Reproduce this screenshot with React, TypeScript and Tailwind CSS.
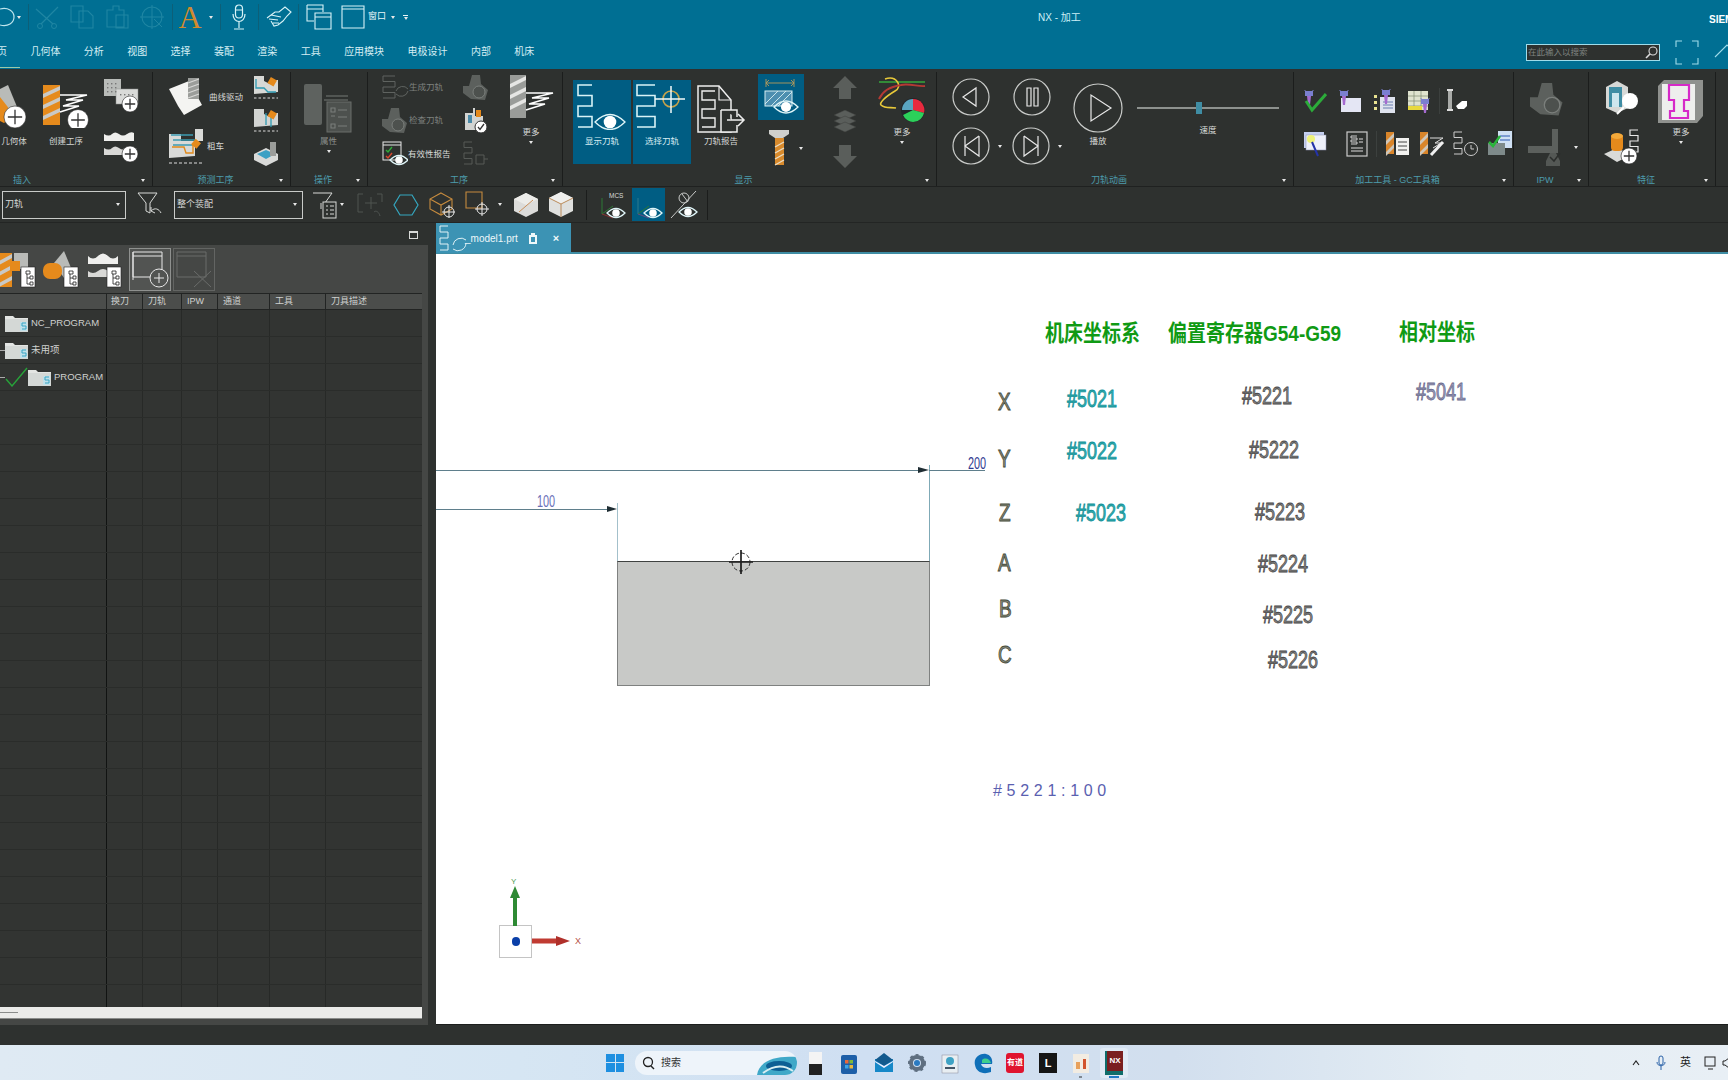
import React from "react";

type P = { children?: React.ReactNode; className?: string };
const S = ({ w, h, children, className = "" }: { w: number; h: number; children?: React.ReactNode; className?: string }) => (
  <svg width={w} height={h} viewBox={`0 0 ${w} ${h}`} className={`block shrink-0 ${className}`} fill="none">{children}</svg>
);

const serp = (x: number, y: number, w: number, h: number) =>
  `M${x + w} ${y}H${x}V${y + h / 4}H${x + w}V${y + h / 2}H${x}V${y + (3 * h) / 4}H${x + w}`;
const Serp = ({ x, y, w, h, c = "#cfeff5", sw = 1.6 }: any) => <path d={serp(x, y, w, h) + `V${y + h}H${x}`} stroke={c} strokeWidth={sw} />;
const Eye = ({ cx, cy, r = 14, c = "#dff5f8" }: any) => (
  <g>
    <path d={`M${cx - r} ${cy}Q${cx} ${cy - r} ${cx + r} ${cy}Q${cx} ${cy + r} ${cx - r} ${cy}Z`} stroke={c} strokeWidth="1.3" fill="none" />
    <circle cx={cx} cy={cy} r={r * 0.42} fill="#fff" />
  </g>
);
const Plus = ({ cx, cy, r = 11 }: any) => (
  <g>
    <circle cx={cx} cy={cy} r={r} fill="#fff" stroke="#222" strokeWidth="0.6" />
    <path d={`M${cx - r * 0.65} ${cy}H${cx + r * 0.65}M${cx} ${cy - r * 0.65}V${cy + r * 0.65}`} stroke="#333" strokeWidth="1.3" />
  </g>
);
const Mill = ({ x, y, w, h, o = "#e58a1c", b = "#c9c9c6" }: any) => {
  const n = Math.floor(h / 11);
  return (
    <g>
      <rect x={x} y={y} width={w} height={h} fill={o} />
      {Array.from({ length: n }).map((_, i) => (
        <polygon key={i} points={`${x},${y + i * 11 + 9} ${x + w},${y + i * 11 + 1} ${x + w},${y + i * 11 + 5} ${x},${y + i * 11 + 13}`} fill={b} />
      ))}
    </g>
  );
};
const Chev = ({ x, y, w = 24 }: any) => (
  <path d={`M${x} ${y}H${x + w}L${x + 6} ${y + 5}H${x + w - 4}L${x + 3} ${y + 11}H${x + w - 8}L${x} ${y + 17}`} stroke="#fff" strokeWidth="1.5" />
);
const Caret = ({ className = "" }: P) => <span className={`block w-0 h-0 border-x-[2.5px] border-x-transparent border-t-[3px] border-t-[#e8e8e8] ${className}`} />;
const Sep = ({ className = "" }: P) => <span className={`block w-px h-[26px] bg-[#0d5f78] shrink-0 ${className}`} />;

const Group = ({ w, label, children, lc = "pr-[12px]" }: { w: string; label: string; children: React.ReactNode; lc?: string }) => (
  <section className={`relative h-[114px] shrink-0 ${w} border-r border-[#1b1d1c]`}>
    <div className="flex h-full">{children}</div>
    <div className={`absolute bottom-0 left-0 right-0 text-center text-[9px] leading-[12px] text-[#4d9cac] ${lc}`}>{label}</div>
    <Caret className="absolute right-[7px] bottom-[4px]" />
  </section>
);

const Big = ({ w, pt, icon, label, caret, cls = "", dim, h = "h-[63px]" }: { w: string; pt: string; icon: React.ReactNode; label: string; caret?: boolean; cls?: string; dim?: boolean; h?: string }) => (
  <div className={`flex flex-col items-center shrink-0 ${w} ${cls}`}>
    <div className={`${h} ${pt}`}>{icon}</div>
    <span className={`text-[8.5px] leading-[12px] whitespace-nowrap ${dim ? "text-[#8b8f8c]" : "text-[#d6d8d6]"}`}>{label}</span>
    {caret && <Caret className="mt-[3px]" />}
  </div>
);

/* ---------- ribbon icons ---------- */
const IcGeo = () => (
  <S w={28} h={43}>
    <polygon points="0,4 8,0 22,34 14,40 0,22" fill="#b9bbb8" />
    <polygon points="-2,12 0,12 14,30 4,38 0,36" fill="#e58a1c" />
    <Plus cx={15} cy={32} r={11} />
  </S>
);
const IcOp = () => (
  <S w={48} h={43}>
    <Mill x={1} y={0} w={17} h={40} />
    <Chev x={18} y={10} w={27} />
    <Plus cx={36} cy={35} r={10.5} />
  </S>
);
const IcBlockPlus = () => (
  <S w={36} h={34}>
    <rect x={0} y={0} width={17} height={17} fill="#b9bcb9" />
    <rect x={12} y={10} width={22} height={15} fill="#d9dad8" stroke="#8d8f8d" strokeWidth="0.5" />
    <g fill="#777">
      {[3, 7, 11].map((x) => [4, 8, 12].map((y) => <rect key={x + "-" + y} x={x} y={y} width="1.4" height="1.4" />))}
      {[16, 20, 24, 28].map((x) => <rect key={x} x={x} y={15} width="1.4" height="1.4" />)}
    </g>
    <Plus cx={26} cy={25} r={8} />
  </S>
);
const IcWavePlus = () => (
  <S w={36} h={34}>
    <path d="M0 4Q5 7 8 4T15 4T23 4T30 3V11H0Z" fill="#efefed" />
    <path d="M0 18Q5 21 8 18T15 18T23 18V25H0Z" fill="#d9d9d7" />
    <Plus cx={26} cy={24} r={8} />
  </S>
);
const IcCurve = () => (
  <S w={35} h={38}>
    <polygon points="0,11 20,3 33,27 15,37 9,28" fill="#f4f4f2" />
    <rect x={19} y={0} width={11} height={21} fill="#9b9d9a" />
    <path d="M19 5L30 1M19 10L30 6M19 15L30 11M19 20L30 16" stroke="#d8d8d6" strokeWidth="1.2" />
  </S>
);
const IcTurnBig = () => (
  <S w={35} h={35}>
    <polygon points="0,5 12,5 12,12 34,12 34,0 26,0 26,27 0,29" fill="#d9dad8" />
    <path d="M2 6H24M4 11H26M4 16H24" stroke="#3d9bb1" strokeWidth="1.4" />
    <path d="M3 18H15L17 24H24V16" stroke="#e08a1c" strokeWidth="1.4" />
    <rect x={24} y={11} width={7} height={7} fill="#e58a1c" transform="rotate(40 27 14)" />
    <path d="M0 34H35" stroke="#ddd" strokeDasharray="3 2" />
  </S>
);
const IcTurnSm = ({ v = 0 }: { v?: number }) => (
  <S w={24} h={24}>
    <polygon points="0,0 10,0 10,5 16,8 20,4 24,4 24,16 0,18" fill={v ? "#d2d4d2" : "#d8d9d6"} />
    <path d={v ? "M12 4V16M17 6V18" : "M2 3V12H10L14 16H22"} stroke="#2e9ab2" strokeWidth="1.3" />
    <rect x={15} y={2} width={7} height={7} fill="#e58a1c" transform="rotate(30 18 5)" />
    <path d="M0 22H24" stroke="#ddd" strokeDasharray="2.5 2" />
  </S>
);
const IcPocket = () => (
  <S w={24} h={24}>
    <polygon points="0,12 12,6 24,12 24,18 12,24 0,18" fill="#d9dad8" />
    <polygon points="3,12 12,8 21,12 12,17" fill="#3ba0c4" />
    <rect x={16} y={0} width={6} height={14} fill="#9b9d9a" />
  </S>
);
const IcAttr = () => (
  <S w={49} h={49}>
    <rect x={0} y={0} width={18} height={41} rx={2} fill="#5e625f" />
    <path d="M20 16H44M22 12H44" stroke="#5e625f" strokeWidth="1.5" />
    <rect x={23} y={18} width={24} height={30} fill="#4d514e" stroke="#6a6e6b" />
    <path d="M27 24H31V28H27ZM34 26H43M27 32H31M34 33H43M27 40H31V44H27ZM34 42H43" stroke="#7a7e7b" strokeWidth="1.1" />
  </S>
);
const IcGen = () => (
  <S w={27} h={25}>
    <Serp x={1} y={1} w={12} h={22} c="#5f6360" sw={1} />
    <path d="M14 16a7 7 0 0 1 12-2M26 16a7 7 0 0 1-12 3" stroke="#5f6360" strokeWidth="1" />
  </S>
);
const IcMachine = ({ x = 0 }: { x?: number }) => (
  <g transform={`translate(${x} 0)`}>
    <polygon points="0,11 6,11 9,0 17,0 18,9 25,15 22,25 8,24 0,18" fill="#5c605d" />
    <circle cx={16} cy={17} r={6} fill="#4d514e" stroke="#7b7f7c" />
  </g>
);
const IcReport = () => (
  <S w={26} h={26}>
    <rect x={1} y={1} width={18} height={18} stroke="#e8e8e8" fill="#2d302e" />
    <path d="M1 4H19" stroke="#e8e8e8" />
    <path d="M4 9L6 11L10 6" stroke="#2fae3a" strokeWidth="1.4" />
    <path d="M4 15L6 17L10 12" stroke="#d9482d" strokeWidth="1.4" />
    <Eye cx={17} cy={19} r={9} />
  </S>
);
const IcMachCheck = () => (
  <S w={25} h={25}>
    <polygon points="2,5 10,5 10,0 12,0 12,8 20,8 20,22 2,22" fill="#d2d4d2" />
    <rect x={5} y={7} width={4} height={8} fill="#4a8aa8" />
    <rect x={13} y={2} width={5} height={7} fill="#e58a1c" />
    <circle cx={18} cy={19} r={6} fill="#fff" stroke="#333" />
    <path d="M15 19L17 21.5L21 16" stroke="#333" strokeWidth="1.3" />
  </S>
);
const IcDimSerpDoc = () => (
  <S w={25} h={25}>
    <Serp x={1} y={1} w={8} h={22} c="#565a57" sw={1} />
    <path d="M13 14H21V23H13ZM21 18H25" stroke="#565a57" />
  </S>
);
const IcMoreMill = () => (
  <S w={46} h={44}>
    <Mill x={2} y={0} w={16} h={43} o="#9a9c99" b="#e6e6e4" />
    <Chev x={18} y={18} w={27} />
  </S>
);
const IcShow = () => (
  <S w={58} h={50}>
    <Serp x={5} y={5} w={14} h={42} c="#d8f3f7" />
    <Eye cx={37} cy={42} r={15} />
  </S>
);
const IcPick = () => (
  <S w={58} h={50}>
    <Serp x={4} y={5} w={18} h={42} c="#d8f3f7" />
    <circle cx={38} cy={19} r={8} stroke="#c7a24a" strokeWidth="1.6" />
    <path d="M22 19H52M38 6V33" stroke="#f2fafa" strokeWidth="1.5" />
  </S>
);
const IcPathReport = () => (
  <S w={49} h={50}>
    <path d="M1 1H22L34 15V47H1Z" stroke="#eee" strokeWidth="1.5" />
    <path d="M22 1V15H34" stroke="#eee" strokeWidth="1.2" />
    <Serp x={5} y={6} w={13} h={36} c="#eee" sw={1.4} />
    <path d="M24 25H40V32M40 40V47H24V25" stroke="#eee" strokeWidth="1.5" fill="#2d302e" />
    <path d="M30 35H47M41 29L47 35L41 41" stroke="#eee" strokeWidth="1.5" />
  </S>
);
const IcClear = () => (
  <S w={46} h={46}>
    <path d="M8 9H36M8 5V13M36 5V13M11 6L8 9L11 12M33 6L36 9L33 12" stroke="#b49a5a" strokeWidth="0.9" />
    <rect x={7} y={17} width={27} height={15} fill="#4d8fb0" stroke="#d8eef2" />
    <path d="M7 30L20 17M13 32L28 17M20 32L34 18" stroke="#d8eef2" strokeWidth="0.9" />
    <Eye cx={28} cy={33} r={12} />
  </S>
);
const IcEndmill = () => (
  <S w={22} h={36}>
    <polygon points="1,0 21,0 21,4 15,8 15,13 7,13 7,8 1,4" fill="#cfcfcc" />
    <rect x={7} y={8} width={9} height={27} fill="#d88a2c" />
    <path d="M7 17L16 12M7 23L16 18M7 29L16 24M7 35L16 30" stroke="#eadcc4" strokeWidth="1.4" />
  </S>
);
const Arrow = ({ up }: { up?: boolean }) => (
  <S w={24} h={24}>
    <polygon points={up ? "12,0 24,12 18,12 18,23 6,23 6,12 0,12" : "12,24 24,12 18,12 18,1 6,1 6,12 0,12"} fill="#5a5e5b" />
  </S>
);
const Layers = () => (
  <S w={24} h={24}>
    {[0, 6, 12].map((y) => <polygon key={y} points={`12,${y} 23,${y + 5} 12,${y + 10} 1,${y + 5}`} fill="#5a5e5b" stroke="#3c3f3d" strokeWidth="0.5" />)}
  </S>
);
const IcMorePie = () => (
  <S w={50} h={46}>
    <path d="M2 5H48" stroke="#35a83c" strokeWidth="1.6" />
    <path d="M8 2C20 -2 26 10 18 14C8 20 2 26 4 28C8 32 14 30 19 31" stroke="#e8c93a" strokeWidth="1.6" />
    <path d="M2 22C6 14 12 10 24 8C32 6 42 10 48 9" stroke="#b53a34" strokeWidth="2" />
    <circle cx={36} cy={33} r={12} fill="#22262a" />
    <path d="M36 33V22A11 11 0 0 0 25 33Z" fill="#5aa5c0" />
    <path d="M36 33V22A11 11 0 0 1 47 36Z" fill="#e82a3e" />
    <path d="M36 33L47 36A11 11 0 0 1 26 38Z" fill="#2cd05a" />
  </S>
);
const Circ = ({ d, s = 38 }: { d: string; s?: number }) => (
  <S w={s} h={s}>
    <circle cx={s / 2} cy={s / 2} r={s / 2 - 1} stroke="#c9cbc9" strokeWidth="1.2" />
    <path d={d} stroke="#e8e8e8" strokeWidth="1.2" />
  </S>
);
const Cube = ({ c = "#b5804a" }: { c?: string }) => (
  <S w={26} h={28}>
    <polygon points="13,1 25,7 25,20 13,26 1,20 1,7" fill="#dfe0de" />
    <polygon points="13,1 25,7 13,13 1,7" fill="#efefed" />
    <path d="M13 13V26M13 13L25 7M13 13L1 7" stroke={c} strokeWidth="0.9" />
  </S>
);
/* small toolbox icons */
const Cutter = ({ x = 0, y = 0 }: any) => (
  <g transform={`translate(${x} ${y})`}>
    <rect x={1} y={0} width={8} height={5} fill="#7b7fd0" />
    <path d="M1 0V-1M9 0V-1" stroke="#7b7fd0" />
    <polygon points="3,5 7,5 6,14 4,14" fill="#a56ad0" />
  </g>
);
const T1 = () => (
  <S w={24} h={24}><Cutter x={1} y={2} /><path d="M3 12L9 21L23 5" stroke="#2cab3a" strokeWidth="3" /></S>
);
const T2 = () => (
  <S w={24} h={24}><rect x={3} y={9} width={20} height={14} fill="#e4e6f4" /><Cutter x={1} y={2} /></S>
);
const T3 = () => (
  <S w={24} h={24}><rect x={8} y={8} width={15} height={16} fill="#dfe3ee" /><path d="M11 13H21M11 16H21M11 19H21" stroke="#6a7fb0" /><Cutter x={9} y={1} /><rect x={2} y={6} width={3} height={3} fill="#e8e290" /><rect x={2} y={12} width={3} height={3} fill="#e8e290" /><rect x={2} y={18} width={3} height={3} fill="#e8e290" /></S>
);
const T4 = () => (
  <S w={24} h={24}><rect x={1} y={2} width={20} height={19} fill="#dfe3cf" /><path d="M1 7H21M1 12H21M1 17H21M7 2V21M14 2V21" stroke="#7f8a70" strokeWidth="0.7" /><rect x={1} y={17} width={14} height={4} fill="#e8d93f" /><Cutter x={13} y={10} /></S>
);
const T5 = () => (
  <S w={26} h={24}><rect x={2} y={0} width={4} height={22} fill="#a9aba8" /><rect x={1} y={0} width={6} height={2} fill="#ddd" /><rect x={1} y={20} width={6} height={2} fill="#ddd" /><path d="M10 17L16 12H21V17L18 20H12Z" fill="#fff" /></S>
);
const T6 = () => (
  <S w={24} h={26}><rect x={1} y={1} width={20} height={16} fill="#c5cff0" /><rect x={3} y={4} width={20} height={15} fill="#eef0fa" stroke="#8a90b0" strokeWidth="0.5" /><circle cx={8} cy={8} r={4} fill="#eef27a" /><path d="M9 11L15 25" stroke="#2433a8" strokeWidth="2" /></S>
);
const T7 = () => (
  <S w={24} h={26}><rect x={2} y={1} width={20} height={24} stroke="#ccc" strokeWidth="1.2" /><Serp x={6} y={5} w={6} h={8} c="#ddd" sw={0.9} /><path d="M6 17H18M6 20H18M14 8H18M14 11H18" stroke="#ddd" /></S>
);
const T8 = () => (
  <S w={26} h={26}><Mill x={1} y={1} w={8} h={22} o="#d9852a" b="#cfc6b8" /><rect x={11} y={7} width={13} height={17} fill="#f1f1ef" /><path d="M13 11H22M13 15H22M13 19H22" stroke="#444" /></S>
);
const T9 = () => (
  <S w={26} h={26}><Mill x={1} y={1} w={8} h={22} o="#d9852a" b="#cfc6b8" /><path d="M11 7H24L16 12H22L14 17" stroke="#ddd" /><path d="M24 11L12 24" stroke="#f0f0f0" strokeWidth="3" /></S>
);
const T10 = () => (
  <S w={26} h={26}><Serp x={1} y={1} w={8} h={22} c="#ccc" sw={1} /><circle cx={18} cy={18} r={6.5} stroke="#ccc" /><path d="M18 14V18H21" stroke="#ccc" /></S>
);
const T11 = () => (
  <S w={26} h={26}><rect x={11} y={0} width={14} height={17} fill="#cfe0f4" /><path d="M13 5H23M13 9H23" stroke="#2a58b0" /><rect x={1} y={12} width={17} height={12} fill="#7e8a8a" /><path d="M2 11L6 15L13 5" stroke="#29b53a" strokeWidth="2.5" /></S>
);
const IpwA = () => (
  <S w={38} h={36}><g transform="translate(2 3) scale(1.3)"><polygon points="0,11 6,11 9,0 17,0 18,9 25,15 22,25 8,24 0,18" fill="#5c605d" /><circle cx={17} cy={17} r={6} fill="#4d514e" stroke="#7b7f7c" /></g></S>
);
const IpwB = () => (
  <S w={38} h={37}><path d="M0 17H24V0H30V24H0Z" fill="#5c605d" /><polygon points="18,37 32,37 32,32 28,24 22,24 18,32" fill="#545855" /><path d="M22 28L26 32L32 24" stroke="#2b2e2c" strokeWidth="1.5" /></S>
);
const FeatA = () => (
  <S w={37} h={36}><polygon points="2,7 13,1 24,7 24,28 13,33 2,28" fill="#d6d8d6" /><rect x={5} y={7} width={13} height={20} fill="#3f8da4" /><rect x={8} y={13} width={7} height={14} fill="#cde6ee" /><circle cx={26} cy={21} r={8} fill="#fff" /><path d="M20 27L13 34" stroke="#fff" strokeWidth="2" /></S>
);
const FeatB = () => (
  <S w={37} h={36}><polygon points="0,25 13,19 27,26 13,33" fill="#d9dad8" /><rect x={7} y={5} width={12} height={17} rx={4} fill="#e58a1c" /><ellipse cx={13} cy={7} rx={6} ry={3} fill="#f4a93a" /><Serp x={26} y={1} w={8} h={22} c="#e8e8e8" sw={1.2} /><Plus cx={25} cy={27} r={8} /></S>
);
const FeatC = () => (
  <S w={46} h={44}>
    <polygon points="0,6 6,0 45,0 45,36 39,43 0,43" fill="#8f918e" />
    <rect x={4} y={4} width={33} height={36} fill="#eeefed" />
    <path d="M11 5H31V20H26V31H30V38H12V31H16V20H11Z" stroke="#d62ac8" strokeWidth="2.2" />
  </S>
);
const Folder = () => (
  <S w={23} h={18}>
    <path d="M0 2H8L10 4H23V18H0Z" fill="#e3e5e3" />
    <rect x={0} y={5} width={23} height={13} fill="#d4d8d6" />
    <rect x={15} y={8} width={7} height={9} fill="#bfe0ea" />
    <path d="M21 9H17V12H21V15H17" stroke="#38a5c4" strokeWidth="1" />
  </S>
);
const TreeBadge = () => (
  <g>
    <rect x={0} y={0} width={14} height={20} fill="#fff" stroke="#222" strokeWidth="0.6" />
    <path d="M5 4H9V7H5ZM9 9H12V12H9ZM9 15H12V18H9ZM6 7V17H9M6 11H9" stroke="#222" strokeWidth="0.8" />
  </g>
);

const teal = "text-[#37aeb0] [-webkit-text-stroke:0.6px_#0e8f96]";
const grey = "text-[#8a8a8a] [-webkit-text-stroke:0.6px_#444]";

export default function App() {
  const tabs = ["几何体", "分析", "视图", "选择", "装配", "渲染", "工具", "应用模块", "电极设计", "内部", "机床"];
  return (
    <div className="w-[1728px] h-[1080px] overflow-hidden flex flex-col bg-[#2e312f] text-[#d8dad8] [font-family:'Liberation_Sans','Noto_Sans_CJK_SC',sans-serif]">
      {/* title + tabs */}
      <header className="h-[69px] shrink-0 bg-[#006f93] flex flex-col relative">
        <div className="h-[34px] flex items-center relative">
          <S w={15} h={20}><path d="M0 2C8 0 14 4 14 10S8 20 0 18" stroke="#bfe6ee" strokeWidth="1.2" /></S>
          <Caret className="ml-[2px]" />
          <Sep className="ml-[7px]" />
          <S w={25} h={24} className="ml-[6px]"><path d="M1 4L18 19M23 2L6 19" stroke="#1f86a3" strokeWidth="1.2" /><circle cx="5" cy="21" r="2.5" stroke="#1f86a3" /><circle cx="19" cy="21" r="2.5" stroke="#1f86a3" /></S>
          <S w={24} h={24} className="ml-[10px]"><path d="M1 1H13V17H1ZM9 6H18L23 11V23H9Z" stroke="#1f86a3" strokeWidth="1.1" /></S>
          <S w={24} h={24} className="ml-[11px]"><path d="M2 5H8V1H14V5H19V22H2ZM11 10H23V23H11Z" stroke="#1f86a3" strokeWidth="1.1" /></S>
          <S w={24} h={24} className="ml-[11px]"><circle cx="12" cy="12" r="10" stroke="#1f86a3" strokeWidth="1.1" /><path d="M12 0V24M0 12H24M14 14L22 22" stroke="#1f86a3" /></S>
          <Sep className="ml-[8px]" />
          <span className="ml-[4px] w-[26px] text-center text-[32px] leading-none text-[#d08a2e] [font-family:'Liberation_Serif',serif]">A</span>
          <Caret className="ml-[6px]" />
          <Sep className="ml-[7px]" />
          <S w={14} h={26} className="ml-[11px]"><rect x="3.5" y="1" width="7" height="13" rx="3.5" stroke="#d8f3f7" strokeWidth="1.2" /><path d="M3 6H11M1 10C1 20 13 20 13 10M7 18V24M2 25H12" stroke="#d8f3f7" strokeWidth="1.2" /></S>
          <Sep className="ml-[12px]" />
          <S w={26} h={22} className="ml-[7px]"><path d="M1 12L9 6H13L19 1L25 6L21 10L17 15L12 19L8 20L5 15M5 9L15 11M3 13L12 14M7 17L13 17" stroke="#d8f3f7" strokeWidth="1.1" /></S>
          <Sep className="ml-[6px]" />
          <S w={26} h={26} className="ml-[7px]"><path d="M1 1H17V8M1 5H17M1 1V17H8M9 9H25V25H9ZM9 13H25" stroke="#d8f3f7" strokeWidth="1.1" /></S>
          <S w={24} h={24} className="ml-[9px]"><path d="M1 1H23V23H1ZM1 4H23" stroke="#d8f3f7" strokeWidth="1.1" /></S>
          <span className="ml-[3px] text-[9px] text-[#e8f5f8]">窗口</span>
          <Caret className="ml-[5px]" />
          <span className="ml-[8px] flex flex-col items-center gap-[1px]"><span className="block w-[5px] h-px bg-[#e8f5f8]" /><Caret /></span>
          <span className="absolute left-[1038px] top-[11px] text-[10px] leading-[13px] text-[#cdeff6]">NX - 加工</span>
          <span className="absolute left-[1709px] top-[13px] text-[10px] leading-[13px] font-bold text-white whitespace-nowrap">SIEMENS</span>
        </div>
        <nav className="h-[35px] flex items-center text-[10px] text-[#d5eef3] gap-[23.4px] -ml-[13px] pb-[1px]">
          <span>主页</span>
          {tabs.map((t) => <span key={t}>{t}</span>)}
        </nav>
        <span className="absolute left-0 bottom-[1px] w-[20px] h-[1px] bg-[#9bc9a8]" />
        <div className="absolute left-[1526px] top-[44px] w-[134px] h-[17px] bg-[#2e312f] border border-[#9fdcea] flex items-center justify-between pl-[1px] pr-[1px]">
          <span className="text-[8.5px] text-[#7e8380]">在此输入以搜索</span>
          <S w={13} h={13}><circle cx="8" cy="5" r="4" stroke="#ddd" strokeWidth="1.1" /><path d="M5 8L1 12" stroke="#ddd" strokeWidth="1.6" /></S>
        </div>
        <S w={24} h={25} className="absolute left-[1675px] top-[40px]"><path d="M7 1H1V7M17 1H23V7M1 18V24H7M23 18V24H17" stroke="#9fdcea" strokeWidth="1.1" /></S>
        <S w={14} h={14} className="absolute left-[1714px] top-[44px]"><path d="M1 13L13 1L14 2" stroke="#9fdcea" strokeWidth="1.1" /></S>
      </header>

      {/* ribbon */}
      <div className="h-[118px] shrink-0 flex pt-[3px] bg-[#2e312f] border-b border-[#1f2120] w-[1728px]">
        <Group w="w-[153px]" label="插入" lc="pr-[108px]">
          <Big w="w-[28px]" pt="pt-[13px]" icon={<IcGeo />} label="几何体" />
          <Big w="w-[48px]" cls="ml-[14px]" pt="pt-[13px]" icon={<IcOp />} label="创建工序" />
          <div className="ml-[14px] pt-[7px] flex flex-col gap-[17px]"><IcBlockPlus /><IcWavePlus /></div>
        </Group>
        <Group w="w-[138px]" label="预测工序">
          <div className="pl-[16px] pt-[6px] w-[100px] flex flex-col gap-[13px]">
            <div className="flex items-center gap-[5px]"><IcCurve /><span className="text-[8.5px] whitespace-nowrap">曲线驱动</span></div>
            <div className="flex items-center gap-[3px]"><IcTurnBig /><span className="text-[8.5px]">粗车</span></div>
          </div>
          <div className="pt-[4px] pl-[1px] flex flex-col gap-[9px]"><IcTurnSm /><IcTurnSm v={1} /><IcPocket /></div>
        </Group>
        <Group w="w-[77px]" label="操作">
          <Big w="w-[75px]" pt="pt-[12px]" icon={<IcAttr />} label="属性" caret dim />
        </Group>
        <Group w="w-[195px]" label="工序">
          <div className="pl-[14px] pt-[3px] w-[95px] flex flex-col gap-[8px] text-[8.5px]">
            <div className="h-[25px] flex items-center text-[#7e827f]"><IcGen /><span>生成刀轨</span></div>
            <div className="h-[25px] flex items-center gap-[2px] text-[#7e827f]"><S w={25} h={25}><IcMachine /></S><span>检查刀轨</span></div>
            <div className="h-[26px] flex items-center text-[#d8dad8]"><IcReport /><span className="whitespace-nowrap">有效性报告</span></div>
          </div>
          <div className="pt-[3px] w-[39px] flex flex-col gap-[8px]">
            <S w={25} h={25}><IcMachine /></S>
            <IcMachCheck />
            <IcDimSerpDoc />
          </div>
          <Big w="w-[46px]" cls="ml-[6px]" h="h-[54px]" pt="pt-[3px]" icon={<IcMoreMill />} label="更多" caret />
        </Group>
        <Group w="w-[374px]" label="显示">
          <div className="pl-[10px] pt-[8px] flex gap-[2px] h-[92px] shrink-0">
            <div className="w-[58px] h-[84px] bg-[#005d83] flex flex-col items-center"><IcShow /><span className="text-[8.5px] leading-[12px] mt-[5px] text-[#d8eef3]">显示刀轨</span></div>
            <div className="w-[58px] h-[84px] bg-[#005d83] flex flex-col items-center"><IcPick /><span className="text-[8.5px] leading-[12px] mt-[5px] text-[#d8eef3]">选择刀轨</span></div>
          </div>
          <Big w="w-[60px]" pt="pt-[13px]" icon={<IcPathReport />} label="刀轨报告" />
          <div className="ml-[7px] w-[46px] pt-[2px] flex flex-col">
            <div className="w-[46px] h-[46px] bg-[#005d83]"><IcClear /></div>
            <div className="mt-[10px] ml-[10px] flex items-center gap-[9px]"><IcEndmill /><Caret /></div>
          </div>
          <div className="ml-[29px] pt-[4px] flex flex-col gap-[10px]"><Arrow up /><Layers /><Arrow /></div>
          <Big w="w-[50px]" cls="ml-[20px]" h="h-[54px]" pt="pt-[5px]" icon={<IcMorePie />} label="更多" caret />
        </Group>
        <Group w="w-[357px]" label="刀轨动画">
          <div className="pl-[15px] pt-[6px] flex flex-col gap-[11px] w-[136px]">
            <div className="flex gap-[23px]"><Circ d="M24 10V28L11 19Z" /><Circ d="M14 10H18V28H14ZM21 10H25V28H21Z" /></div>
            <div className="flex items-center">
              <Circ d="M13 9V29M27 9V29L13 19L27 9" />
              <Caret className="ml-[8px]" />
              <span className="w-[10px]" />
              <Circ d="M26 9V29M12 9V29L26 19L12 9" />
              <Caret className="ml-[8px]" />
            </div>
          </div>
          <Big w="w-[50px]" pt="pt-[11px]" icon={<Circ s={50} d="M18 12V38L38 25Z" />} label="播放" />
          <div className="ml-[14px] w-[142px] pt-[35px] flex flex-col items-center relative">
            <div className="w-[142px] h-[2px] bg-[#8d918e]" />
            <span className="absolute left-[59px] top-[30px] w-[6px] h-[12px] bg-[#3f8da4]" />
            <span className="mt-[15px] text-[8.5px] leading-[12px]">速度</span>
          </div>
        </Group>
        <Group w="w-[220px]" label="加工工具 - GC工具箱">
          <div className="pl-[9px] pt-[16px] flex flex-col gap-[17px]">
            <div className="flex items-center gap-[10.5px]"><T1 /><T2 /><T3 /><T4 /><span className="w-px h-[26px] bg-[#3c403e] -ml-[2px] -mr-[5px]" /><T5 /></div>
            <div className="flex items-center gap-[8px]"><T6 /><span className="w-[2px]" /><T7 /><span className="w-px h-[26px] bg-[#3c403e] -ml-[1px]" /><T8 /><T9 /><T10 /><T11 /></div>
          </div>
        </Group>
        <Group w="w-[75px]" label="IPW">
          <div className="pl-[14px] pt-[8px] flex flex-col gap-[13px]">
            <IpwA />
            <div className="flex items-center gap-[8px]"><IpwB /><Caret /></div>
          </div>
        </Group>
        <Group w="w-[127px]" label="特征">
          <div className="pl-[15px] pt-[8px] w-[69px] flex flex-col gap-[13px] shrink-0"><FeatA /><FeatB /></div>
          <Big w="w-[46px]" h="h-[54px]" pt="pt-[8px]" icon={<FeatC />} label="更多" caret />
        </Group>
      </div>

      {/* second toolbar */}
      <div className="h-[36px] shrink-0 flex items-center bg-[#2e312f] border-b border-[#232524]">
        <div className="ml-[2px] w-[124px] h-[28px] border border-[#c9cbc9] flex items-center justify-between px-[2px]"><span className="text-[9px]">刀轨</span><Caret className="mr-[3px]" /></div>
        <S w={26} h={28} className="ml-[11px]"><path d="M1 2H20L13 12V22L9 20V12ZM14 20C18 16 22 18 24 22M14 20L18 22M14 20V16" stroke="#d8dad8" strokeWidth="1" /></S>
        <div className="ml-[11px] w-[129px] h-[28px] border border-[#c9cbc9] flex items-center justify-between px-[2px]"><span className="text-[9px]">整个装配</span><Caret className="mr-[3px]" /></div>
        <S w={26} h={28} className="ml-[9px]"><path d="M1 2H20L13 12V18M9 18V12" stroke="#d8dad8" strokeWidth="1" /><rect x="11" y="11" width="13" height="16" stroke="#d8dad8" fill="#2e312f" /><path d="M14 15H16M18 15H22M14 19H16M18 19H22M14 23H16M18 23H22" stroke="#d8dad8" /></S>
        <Caret className="ml-[2px]" />
        <S w={27} h={26} className="ml-[13px]"><path d="M6 2H1V20H6M20 2H25V10M8 11H20M14 5V17M17 20C19 18 22 20 23 24" stroke="#4f5451" strokeWidth="1" /></S>
        <S w={26} h={24} className="ml-[9px]"><polygon points="7,2 19,2 25,12 19,22 7,22 1,12" stroke="#35a7c0" strokeWidth="1.2" /></S>
        <S w={26} h={28} className="ml-[10px]"><path d="M12 2L23 8V18L12 24L1 18V8ZM1 8L12 14L23 8M12 14V24" stroke="#c58a3e" strokeWidth="1.1" /><circle cx="20" cy="21" r="5" stroke="#e8e8e8" /><path d="M20 14V27M13 21H26" stroke="#e8e8e8" /></S>
        <S w={26} h={28} className="ml-[10px]"><path d="M1 1H17V17H1Z" stroke="#c58a3e" strokeWidth="1.1" /><circle cx="17" cy="18" r="5" stroke="#e8e8e8" /><path d="M17 11V25M10 18H24" stroke="#e8e8e8" /></S>
        <Caret className="ml-[7px]" />
        <S w={26} h={26} className="ml-[11px]"><polygon points="13,1 25,7 25,19 13,25 1,19 1,7" fill="#dcdcda" /><polygon points="13,1 25,7 13,13 1,7" fill="#ecece9" /><path d="M6 20L20 8" stroke="#c98f5a" /></S>
        <S w={26} h={28} className="ml-[9px]"><Cube /></S>
        <span className="ml-[12px] w-px h-[30px] bg-[#1b1d1c]" />
        <S w={28} h={30} className="ml-[12px]"><path d="M3 24V8" stroke="#2d7a36" /><path d="M3 24L14 16" stroke="#2d7a36" /><path d="M3 24L14 28" stroke="#8a3030" /><Eye cx={17} cy={23} r={9} /></S>
        <div className="relative w-0"><span className="absolute -left-[18px] -top-[12px] text-[6.5px] text-[#d8dad8] leading-none">MCS</span></div>
        <div className="ml-[5px] w-[33px] h-[33px] bg-[#005d83] flex items-center justify-center"><S w={28} h={30}><path d="M3 24V8" stroke="#2d7a8e" /><path d="M3 24L14 16" stroke="#2d7a36" /><path d="M3 24L14 28" stroke="#6a4a80" /><Eye cx={18} cy={23} r={9} /></S></div>
        <S w={28} h={30} className="ml-[5px]"><circle cx="14" cy="8" r="5" stroke="#c9cbc9" /><path d="M26 1L1 28M12 4L18 12" stroke="#c9cbc9" /><Eye cx={18} cy={22} r={9} /></S>
        <span className="ml-[9px] w-px h-[30px] bg-[#1b1d1c]" />
      </div>

      {/* main */}
      <div className="flex-1 flex min-h-0">
        {/* navigator */}
        <aside className="w-[436px] shrink-0 flex flex-col pr-[8px]">
          <div className="h-[22px] flex items-center justify-end pr-[2px]"><span className="block w-[9px] h-[8px] border border-[#d8dad8] border-t-2 mt-[2px] mr-[8px]" /></div>
          <div className="flex-1 min-h-0 flex flex-col bg-[#454745] pb-[6px] pr-[6px]">
            <div className="h-[48px] shrink-0 flex items-center pl-0 pt-[1px]">
              <S w={37} h={38}><Mill x={-3} y={2} w={15} h={34} /><rect x={14} y={2} width={14} height={16} fill="#b9bbb8" /><rect x={10} y={10} width={10} height={10} fill="#e58a1c" /><g transform="translate(21 16)"><TreeBadge /></g></S>
              <S w={38} h={38} className="ml-[5px]"><polygon points="12,12 22,0 32,24 24,30" fill="#b9bbb8" /><rect x={1} y={12} width={19} height={16} rx={7} fill="#e58a1c" /><g transform="translate(22 16)"><TreeBadge /></g></S>
              <S w={36} h={38} className="ml-[8px]"><path d="M0 5Q5 10 10 5T20 5T30 5V13H0Z" fill="#efefed" /><path d="M0 20Q5 24 10 20T20 20V26H0Z" fill="#d9d9d7" /><g transform="translate(19 16)"><TreeBadge /></g></S>
              <div className="ml-[5px] w-[42px] h-[43px] bg-[#525452] border border-[#8f918f] flex items-center justify-center"><S w={40} h={41}><path d="M3 3H32V28H3ZM3 7H32M3 31V3" stroke="#e8e8e8" strokeWidth="1" /><circle cx="29" cy="29" r="9" stroke="#e8e8e8" fill="#525452" /><path d="M24 29H34M29 24V34" stroke="#e8e8e8" /></S></div>
              <div className="ml-[2px] w-[42px] h-[43px] border border-[#636563] flex items-center justify-center"><S w={40} h={41}><path d="M3 3H32V28H3ZM3 7H32M20 22L37 38M37 22L20 38" stroke="#6a6c6a" strokeWidth="1" /></S></div>
            </div>
            <div className="h-[17px] shrink-0 grid grid-cols-[107px_36px_39px_36px_52px_56px_96px] bg-[#4b4d4b] border-y border-[#222423] text-[9px] leading-[15px] text-[#cfd1cf]">
              <span className="border-r border-[#222423]" />
              <span className="border-r border-[#222423] pl-[4px]">换刀</span>
              <span className="border-r border-[#222423] pl-[5px]">刀轨</span>
              <span className="border-r border-[#222423] pl-[5px]">IPW</span>
              <span className="border-r border-[#222423] pl-[5px]">通道</span>
              <span className="border-r border-[#222423] pl-[5px]">工具</span>
              <span className="pl-[5px]">刀具描述</span>
            </div>
            <div className="flex-1 min-h-0 overflow-hidden bg-[#323432]">
              {Array.from({ length: 26 }).map((_, i) => (
                <div key={i} className="h-[27px] grid grid-cols-[107px_36px_39px_36px_52px_56px_96px] border-b border-[#2a2c2a]">
                  <div className="border-r border-[#111312] flex items-center text-[9.5px] text-[#cfd1cf]">
                    {i === 0 && <><span className="ml-[5px]"><Folder /></span><span className="ml-[3px]">NC_PROGRAM</span></>}
                    {i === 1 && <><span className="w-[5px] h-px bg-[#aaa]" /><Folder /><span className="ml-[3px]">未用项</span></>}
                    {i === 2 && <><span className="w-[5px] h-px bg-[#aaa]" /><S w={23} h={20}><path d="M1 12L7 19L22 1" stroke="#27a33a" strokeWidth="1.4" /></S><Folder /><span className="ml-[3px]">PROGRAM</span></>}
                  </div>
                  <span className="border-r border-[#272927]" /><span className="border-r border-[#272927]" /><span className="border-r border-[#272927]" /><span className="border-r border-[#272927]" /><span className="border-r border-[#272927]" /><span />
                </div>
              ))}
            </div>
            <div className="h-[12px] shrink-0 bg-[#ebebe9] border-b border-[#8a8c8a] flex items-center"><span className="block w-[18px] h-px bg-[#8a8c8a]" /></div>
          </div>
        </aside>
        {/* graphics */}
        <div className="flex-1 min-w-0 flex flex-col">
          <div className="h-[31px] shrink-0 flex border-b-2 border-[#3f8da4]">
            <div className="w-[135px] h-[30px] bg-[#3c93b4] flex items-center text-[#eef8fa]">
              <S w={33} h={30} className="ml-[3px]"><Serp x={1} y={3} w={8} h={24} c="#dff1f5" sw={1} /><path d="M14 22a8 8 0 0 1 13-5M27 20a8 8 0 0 1-13 6" stroke="#dff1f5" strokeWidth="1" /></S>
              <span className="text-[10px] -ml-[7px]">_model1.prt</span>
              <S w={10} h={13} className="ml-[10px]"><path d="M1 3H3V1H7V3H9V12H1Z" fill="#eef8fa" /><rect x="3" y="5" width="4" height="5" fill="#3c93b4" /></S>
              <span className="ml-[15px] text-[11px] font-bold leading-none">×</span>
            </div>
          </div>
          <main className="relative flex-1 min-h-0 bg-white overflow-hidden border-b border-[#1c1e1d]">
            {/* dimension 200 */}
            <span className="absolute left-0 top-[216px] w-[483px] h-px bg-[#5f7f8c]" />
            <S w={11} h={6} className="absolute left-[482px] top-[213px]"><polygon points="0,0 11,3 0,6" fill="#1f2d33" /></S>
            <span className="absolute left-[493px] top-[211px] w-px h-[96px] bg-[#7fa9b6]" />
            <span className="absolute left-[493px] top-[216px] w-[56px] h-px bg-[#5f7f8c]" />
            <span className="absolute left-[532px] top-[201px] text-[16px] leading-[17px] text-[#303a90] origin-left scale-x-[0.68] whitespace-nowrap">200</span>
            {/* dimension 100 */}
            <span className="absolute left-0 top-[255px] w-[172px] h-px bg-[#5f7f8c]" />
            <S w={10} h={6} className="absolute left-[171px] top-[252px]"><polygon points="0,0 10,3 0,6" fill="#1f2d33" /></S>
            <span className="absolute left-[181px] top-[249px] w-px h-[58px] bg-[#a3c0cb]" />
            <span className="absolute left-[101px] top-[239px] text-[16px] leading-[17px] text-[#6a70b8] origin-left scale-x-[0.68] whitespace-nowrap">100</span>
            {/* block */}
            <div className="absolute left-[181px] top-[307px] w-[313px] h-[125px] bg-[#c8c9c7] border border-[#7f8180] border-t-[#404241]" />
            <S w={26} h={26} className="absolute left-[292px] top-[295px]"><circle cx="13" cy="13" r="9" stroke="#333" strokeWidth="1" strokeDasharray="4 2" /><path d="M13 1V25" stroke="#111" strokeWidth="1.6" /><path d="M1 13H25" stroke="#222" strokeWidth="1.6" /></S>
            {/* headings */}
            {[
              ["机床坐标系", 609, 68],
              ["偏置寄存器G54-G59", 732, 68],
              ["相对坐标", 963, 67],
            ].map(([t, l, y]) => (
              <span key={t as string} style={{ left: l as number, top: y as number }} className="absolute text-[19px] leading-[24px] font-bold text-[#109a14] whitespace-nowrap scale-y-[1.2]">{t}</span>
            ))}
            {[
              ["X", 562, 140], ["Y", 562, 197], ["Z", 563, 251], ["A", 562, 301], ["B", 563, 347], ["C", 562, 393],
            ].map(([t, l, y]) => (
              <span key={t as string} style={{ left: l as number, top: y as number }} className="absolute text-[19px] leading-[18px] text-[#8b8e80] [-webkit-text-stroke:0.7px_#444a38] scale-y-[1.22]">{t}</span>
            ))}
            {[
              ["#5021", 631, 133, teal], ["#5022", 631, 185, teal], ["#5023", 640, 247, teal],
              ["#5221", 806, 130, grey], ["#5222", 813, 184, grey], ["#5223", 819, 246, grey], ["#5224", 822, 298, grey], ["#5225", 827, 349, grey], ["#5226", 832, 394, grey],
              ["#5041", 980, 126, "text-[#9a9ab8] [-webkit-text-stroke:0.6px_#6a6a8c]"],
            ].map(([t, l, y, c]) => (
              <span key={t as string} style={{ left: l as number, top: y as number }} className={`absolute text-[18px] leading-[18px] origin-top-left scale-y-[1.35] whitespace-nowrap ${c}`}>{t}</span>
            ))}
            <span className="absolute left-[557px] top-[529px] text-[16px] leading-[16px] tracking-[4.7px] text-[#5a60b0] whitespace-nowrap">#5221:100</span>
            {/* triad */}
            <div className="absolute left-[63px] top-[671px] w-[33px] h-[33px] bg-white border border-[#c4c4c4] flex items-center justify-center"><span className="block w-[8px] h-[9px] rounded-full bg-[#0a3fa8]" /></div>
            <S w={12} h={40} className="absolute left-[73px] top-[632px]"><rect x="4" y="10" width="4" height="30" fill="#2e8a34" /><polygon points="6,0 11,12 1,12" fill="#2e8a34" /></S>
            <S w={38} h={12} className="absolute left-[96px] top-[681px]"><rect x="0" y="3.5" width="26" height="5" fill="#c03b32" /><polygon points="38,6 24,1 24,11" fill="#b0302a" /></S>
            <span className="absolute left-[75px] top-[623px] text-[8px] leading-[10px] text-[#4b9a52]">Y</span>
            <span className="absolute left-[139px] top-[682px] text-[9px] leading-[10px] text-[#b55048]">X</span>
          </main>
        </div>
      </div>

      {/* status */}
      <div className="h-[20px] shrink-0 bg-[#2e312f]" />

      {/* taskbar */}
      <footer className="h-[35px] shrink-0 relative flex items-center overflow-hidden bg-[linear-gradient(90deg,#dfeaf3_0%,#d6e6f3_30%,#cfdff2_50%,#d2dfee_68%,#e4edf4_85%,#e8eff5_100%)]">
        <div className="shrink-0 ml-[606px] w-[18px] h-[18px] grid grid-cols-2 gap-[1px]">{[0, 1, 2, 3].map((k) => <span key={k} className="bg-[#1e8fe0]" />)}</div>
        <div className="shrink-0 ml-[11px] w-[162px] h-[24px] rounded-full bg-[#eef4fa] flex items-center relative overflow-hidden">
          <S w={14} h={14} className="ml-[7px]"><circle cx="6" cy="6" r="4.5" stroke="#222" strokeWidth="1.3" /><path d="M9 10L12 13" stroke="#222" strokeWidth="1.4" /></S>
          <span className="ml-[5px] text-[10px] text-[#333]">搜索</span>
          <S w={42} h={24} className="absolute right-0 top-0"><path d="M2 24C4 10 20 4 42 6V24Z" fill="#3fa8c8" /><ellipse cx="24" cy="15" rx="13" ry="5" fill="#0d5f94" /><path d="M8 22Q24 10 38 20" stroke="#d8eef2" strokeWidth="2" /></S>
        </div>
        <S w={16} h={26} className="ml-[10px]"><rect x="2" y="2" width="13" height="12" fill="#f4f4f4" /><rect x="2" y="14" width="13" height="11" fill="#222" /></S>
        <S w={18} h={24} className="ml-[17px]"><rect x="1" y="4" width="16" height="19" rx="2" fill="#1d5fa8" /><rect x="5" y="9" width="3.5" height="3.5" fill="#e8693a" /><rect x="9.5" y="9" width="3.5" height="3.5" fill="#7fb93a" /><rect x="5" y="14" width="3.5" height="3.5" fill="#3aa5e8" /><rect x="9.5" y="14" width="3.5" height="3.5" fill="#eab93a" /></S>
        <S w={20} h={20} className="ml-[16px]"><rect x="1" y="6" width="18" height="13" fill="#1688c8" /><polygon points="1,7 10,0 19,7 10,13" fill="#135a8e" /><polygon points="1,8 10,13 19,8 19,9 10,15 1,9" fill="#eef" /></S>
        <S w={20} h={20} className="ml-[13px]"><circle cx="10" cy="10" r="6" stroke="#5f6f80" strokeWidth="4" /><circle cx="10" cy="10" r="8" stroke="#5f6f80" strokeWidth="2" strokeDasharray="3 3" /><circle cx="10" cy="10" r="3" fill="#2a7ac0" /></S>
        <S w={18} h={22} className="ml-[14px]"><rect x="1" y="3" width="16" height="18" fill="#e8eef2" stroke="#889" strokeWidth="0.5" /><circle cx="9" cy="9" r="4" fill="#3ea2c4" /><path d="M4 16H14" stroke="#456" strokeWidth="2" /></S>
        <S w={20} h={22} className="ml-[14px]"><path d="M2 13C0 5 8 1 13 2C18 3 20 8 19 12H8C9 16 14 17 18 15V20C10 23 3 20 2 13Z" fill="#0f6fb8" /><path d="M9 8C12 5 17 7 18 11H9Z" fill="#3ecf8e" /></S>
        <div className="shrink-0 ml-[13px] w-[18px] h-[20px] rounded-[3px] bg-[#e0142e] text-[8px] leading-[20px] text-center text-[#fff] font-bold">有道</div>
        <div className="shrink-0 ml-[15px] w-[18px] h-[20px] bg-[#151515] text-[11px] leading-[20px] text-center text-white font-bold">L</div>
        <S w={18} h={22} className="ml-[15px]"><rect x="1" y="2" width="16" height="19" fill="#f2ece2" /><rect x="4" y="10" width="4" height="7" fill="#e8a05a" /><rect x="11" y="7" width="3" height="10" fill="#d2542e" /></S>
        <div className="shrink-0 ml-[10px] w-[28px] h-[30px] bg-[#dfeaf5] rounded-[3px] flex items-center justify-center relative">
          <div className="w-[18px] h-[24px] bg-[#0f6d6a] flex justify-end"><div className="w-[16px] h-[20px] bg-[#7a1f1f] text-[8px] leading-[20px] text-center text-white font-bold">NX</div></div>
          <span className="absolute bottom-0 left-[9px] w-[10px] h-[2px] bg-[#1f7ac4]" />
        </div>
        <span className="absolute left-[1079px] bottom-[2px] w-[3px] h-[2px] bg-[#7e8790]" />
        <S w={8} h={6} className="ml-[504px]"><path d="M1 5L4 1L7 5" stroke="#222" strokeWidth="1.1" /></S>
        <S w={10} h={16} className="ml-[16px]"><rect x="3" y="1" width="4" height="9" rx="2" stroke="#2a62a8" /><path d="M1 7C1 12 9 12 9 7M5 11V15" stroke="#2a62a8" /></S>
        <span className="shrink-0 ml-[14px] text-[11px] text-[#222]">英</span>
        <S w={12} h={14} className="ml-[13px]"><rect x="1" y="1" width="10" height="9" stroke="#222" /><path d="M4 13H9" stroke="#222" /></S>
        <S w={10} h={12} className="ml-[6px]"><path d="M1 4H3L7 1V11L3 8H1Z" stroke="#222" /></S>
      </footer>
    </div>
  );
}
